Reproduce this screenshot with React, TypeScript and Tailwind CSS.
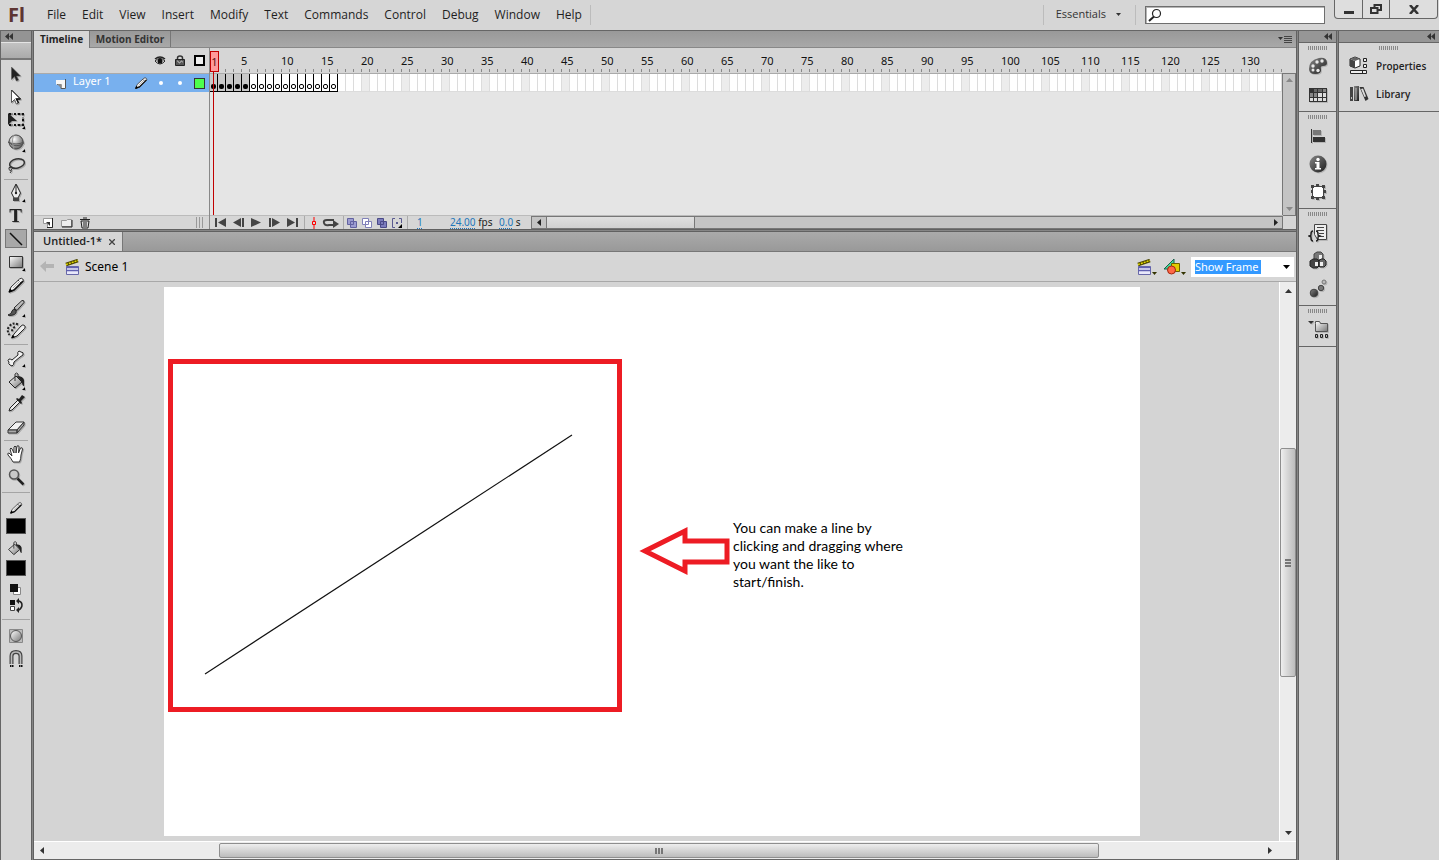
import type { ReactNode } from "react";

const UI = "font-['Open_Sans','Noto_Sans',sans-serif]";
const TAHOMA = "font-['Noto_Sans','Open_Sans',sans-serif]";

function Svg({ children, w = 20, h = 20 }: { children: ReactNode; w?: number; h?: number }) {
  return (
    <svg width={w} height={h} viewBox={`0 0 ${w} ${h}`} fill="none" className="block shrink-0" aria-hidden="true">
      {children}
    </svg>
  );
}

function Gradients() {
  return (
    <svg width="0" height="0" className="absolute" aria-hidden="true">
      <defs>
        <linearGradient id="metal" x1="0" y1="0" x2="1" y2="1">
          <stop offset="0" stopColor="#fff" />
          <stop offset="1" stopColor="#777" />
        </linearGradient>
        <linearGradient id="dark" x1="0" y1="0" x2="1" y2="1">
          <stop offset="0" stopColor="#888" />
          <stop offset="1" stopColor="#1c1c1c" />
        </linearGradient>
        <radialGradient id="ball" cx=".35" cy=".3" r=".8">
          <stop offset="0" stopColor="#fff" />
          <stop offset="1" stopColor="#555" />
        </radialGradient>
      </defs>
    </svg>
  );
}

const corner = <path d="M19 16v3h-3z" fill="#000" />;
const pencil = (
  <>
    <path d="M3 17l2-5 8.500-8q2-1.500 3.300 0t0 3L8 15z" fill="#f4f4f4" stroke="#333" />
    <path d="M17 6l-9 9-5 2" stroke="#111" strokeWidth="1.600" fill="none" />
    <path d="M2.500 17.500l1.500-4 2.500 2.500z" fill="#000" />
    <path d="M12 5l3.500 3.500" stroke="#333" />
    <path d="M7 13l7-7" stroke="#aaa" />
  </>
);
const bucket = (
  <>
    <path d="M3 11l7-6 6 6-7 6z" fill="url(#metal)" stroke="#222" />
    <path d="M9 10V3q1.500-2 3 0v4" stroke="#333" />
    <path d="M11 5q6 0 7 4v6q-2 0-2-4z" fill="#222" />
  </>
);
const arrow = "M5.500 3v12.500l3-3 1.800 4.500 2.200-1-2-4h4z";

const icons = {
  select: <path d={arrow} fill="#222" stroke="#555" strokeWidth=".5" />,
  subselect: (
    <>
      <path d={arrow} fill="#fff" stroke="#555" />
      <path d="M14.500 12h-4l2 4" stroke="#111" strokeWidth="1.500" />
      <path d="M5.500 3l9 9" stroke="#222" />
    </>
  ),
  transform: (
    <>
      <path d="M5 4h12v11H5" stroke="#444" strokeDasharray="2 1" />
      <path d="M8 3h2v2H8zM12 3h2v2h-2zM16 3h2v2h-2zM16 9h2v2h-2zM16 14h2v2h-2zM12 14h2v2h-2zM8 14h2v2H8zM3 14h2v2H3zM3 3h2v2H3z" fill="#111" />
      <path d="M2 3v12l4-4h5z" fill="#222" />
      {corner}
    </>
  ),
  rotate: (
    <>
      <circle cx="10" cy="9" r="7" fill="url(#ball)" stroke="#444" />
      <path d="M2 9q8 4 16 0M2 9q8 7 16 1" stroke="#555" />
      <path d="M8 2q-3 5 0 14" stroke="#999" />
      {corner}
    </>
  ),
  lasso: (
    <>
      <ellipse cx="11" cy="7.500" rx="7.500" ry="4.500" transform="rotate(-12 11 7.5)" stroke="#333" strokeWidth="1.500" />
      <path d="M5 11q-3 0-2 2.500t3-.500-2-2M5 14q1 1-1 3" stroke="#333" />
    </>
  ),
  pen: (
    <>
      <path d="M10 1l4.500 9-2.500 5H8l-2.500-5z" fill="#eee" stroke="#222" />
      <path d="M10 2v8" stroke="#222" />
      <circle cx="10" cy="10" r="1.200" fill="#222" />
      <path d="M7 15h6v3H7z" fill="#444" />
      {corner}
    </>
  ),
  line: <path d="M4 4l12 12" stroke="#111" strokeWidth="1.500" />,
  rect: (
    <>
      <path d="M3.500 4.500h13v11h-13z" fill="url(#metal)" stroke="#333" />
      {corner}
    </>
  ),
  pencil,
  brush: (
    <>
      <path d="M8 10l8-7.500q2.500-.500 2 2l-7 8z" fill="url(#metal)" stroke="#222" />
      <path d="M2 17q4-1 4-4 1-3 4-1 1 4-3 5t-5 0z" fill="#555" stroke="#222" />
      {corner}
    </>
  ),
  spray: (
    <>
      <path d="M6 17l2-4 7-8q2-2 3.500-.500t0 3L11 15z" fill="#eee" stroke="#222" />
      <path d="M12 3.500Q7 1 3.500 5t0 9M9 6q-3 1-3 5" stroke="#222" strokeWidth="2" strokeDasharray="2 1.500" />
      <path d="M5 17.500l1.500-3.500 2.500 2z" fill="#000" />
    </>
  ),
  bone: (
    <>
      <path d="M4 17q-2-1-1-3-2-1 0-3 2 0 3 1l6-5q-1-3 1-4l2 1q3 0 2 3l-3 2-6 5q0 3-2 4z" fill="#f2f2f2" stroke="#222" />
      {corner}
    </>
  ),
  bucket: (
    <>
      {bucket}
      {corner}
    </>
  ),
  dropper: (
    <>
      <path d="M3 17l1-3 8-8 2 2-8 8z" fill="#eee" stroke="#222" />
      <path d="M10 5l1-1 2 1 3-4 3 2-4 4 1 2-1 1z" fill="#222" />
    </>
  ),
  eraser: (
    <>
      <path d="M2 13l8-8h8l-7 8z" fill="#f2f2f2" stroke="#333" />
      <path d="M2 13h9v3H2zM11 16l7-8V5l-7 8z" fill="#aaa" stroke="#333" />
    </>
  ),
  hand: (
    <path
      d="M7 18q-2-4-5-7-1-2 1-2l3 3-2-7q1-2 2 0l2 4V3q1-2 2 0v6l1-7q2-1 2 1l-.500 6 2-5q2-1 2 1l-1.500 6q0 4-1.500 7z"
      fill="#fff"
      stroke="#333"
    />
  ),
  zoom: (
    <>
      <circle cx="8" cy="7.500" r="4.500" fill="#c8c8c8" stroke="#555" strokeWidth="1.500" />
      <path d="M11.500 11.500l6 6" stroke="#222" strokeWidth="2.500" />
    </>
  ),
};

type IconName = keyof typeof icons | "text";

const toolGroups: { name: IconName; label: string }[][] = [
  [
    { name: "select", label: "Selection" },
    { name: "subselect", label: "Subselection" },
    { name: "transform", label: "Free transform" },
    { name: "rotate", label: "3D rotation" },
    { name: "lasso", label: "Lasso" },
  ],
  [
    { name: "pen", label: "Pen" },
    { name: "text", label: "Text" },
    { name: "line", label: "Line" },
    { name: "rect", label: "Rectangle" },
    { name: "pencil", label: "Pencil" },
    { name: "brush", label: "Brush" },
    { name: "spray", label: "Deco" },
  ],
  [
    { name: "bone", label: "Bone" },
    { name: "bucket", label: "Paint bucket" },
    { name: "dropper", label: "Eyedropper" },
    { name: "eraser", label: "Eraser" },
  ],
  [
    { name: "hand", label: "Hand" },
    { name: "zoom", label: "Zoom" },
  ],
];

function Collapse() {
  return (
    <Svg w={8} h={7}>
      <path d="M4 0v7L0 3.500zM8 0v7L4 3.500z" fill="#333" />
    </Svg>
  );
}

function ToolPanel() {
  return (
    <aside className="flex w-[31px] shrink-0 flex-col border-l border-[#666] bg-[#d6d6d6]">
      <div className="flex h-[11px] items-center bg-[#949494] px-1">
        <Collapse />
      </div>
      <div className="h-[18px] border-t border-b-2 border-t-[#e4e4e4] border-b-[#777] bg-linear-to-b from-[#c2c2c2] to-[#aaa]" />
      <div className="flex flex-col items-center pt-[2px] pr-px">
        {toolGroups.map((group, i) => (
          <div key={i} className="flex w-full flex-col items-center">
            {group.map((t) => (
              <button
                key={t.name}
                aria-label={t.label}
                className={
                  t.name === "line"
                    ? "my-[2px] flex h-[19px] w-[22px] items-center justify-center border border-[#777] bg-[#a8a8a8]"
                    : "flex h-[23px] w-[24px] items-center justify-center drop-shadow-[1px_1px_0_rgba(0,0,0,0.2)]"
                }
              >
                {t.name === "text" ? (
                  <span className="font-['Liberation_Serif',serif] text-[19px] leading-5 font-bold text-[#222]">T</span>
                ) : (
                  <Svg>{icons[t.name]}</Svg>
                )}
              </button>
            ))}
            {i < 3 ? <div className="mt-[2px] mb-px h-px w-6 bg-[#a5a5a5]" /> : null}
          </div>
        ))}
        <div className="mt-1 h-px w-7 bg-[#a5a5a5]" />
        <div className="flex flex-col items-center pt-[4px]">
          <button aria-label="Stroke color" className="flex flex-col items-center gap-px">
            <svg width="20" height="20" viewBox="-3 -4 26 26" aria-hidden="true">{pencil}</svg>
            <span className="h-4 w-5 border border-[#555] bg-black" />
          </button>
          <button aria-label="Fill color" className="mt-[5px] flex flex-col items-center gap-px">
            <svg width="20" height="20" viewBox="0 -1 23 23" fill="none" aria-hidden="true">{bucket}</svg>
            <span className="h-4 w-5 border border-[#555] bg-black" />
          </button>
          <button aria-label="Black and white" className="mt-1">
            <Svg w={20} h={18}>
              <path d="M7.500 7.500h7v7h-7z" fill="#fff" stroke="#888" />
              <path d="M4 4h8v8H4z" fill="#111" />
            </Svg>
          </button>
          <button aria-label="Swap colors">
            <Svg w={20} h={16}>
              <path d="M4 2h5v5H4z" fill="#111" />
              <path d="M4.500 8.500h4v4h-4z" fill="#fff" stroke="#444" />
              <path d="M11 3h2q3 1 3 4t-3 5h-2" stroke="#222" strokeWidth="1.500" />
              <path d="M10 3l3-3v6zM10 12l3-3v6z" fill="#222" />
            </Svg>
          </button>
          <div className="my-[5px] h-px w-7 bg-[#a5a5a5]" />
          <button aria-label="Object drawing">
            <Svg w={20} h={22}>
              <path d="M3.500 4.500h13v13h-13z" fill="#bbb" stroke="#888" />
              <circle cx="10" cy="11" r="5.500" fill="url(#metal)" stroke="#555" />
            </Svg>
          </button>
          <button aria-label="Snap to objects">
            <Svg w={20} h={24}>
              <path d="M5.500 17V9q0-4 4.500-4t4.500 4v8" stroke="#444" strokeWidth="4" />
              <path d="M5.500 17V9q0-4 4.500-4t4.500 4v8" stroke="#bbb" strokeWidth="1.600" />
              <path d="M4 19h1.500M6 19h1.500M13 19h1.500M15 19h1.500" stroke="#111" strokeWidth="2" />
            </Svg>
          </button>
        </div>
      </div>
    </aside>
  );
}

const menus = ["File", "Edit", "View", "Insert", "Modify", "Text", "Commands", "Control", "Debug", "Window", "Help"];

function MenuBar() {
  return (
    <header className="flex h-[30px] shrink-0 items-center bg-[#d6d6d6] text-[12px] text-[#1e1e1e]">
      <div className="w-[39px] pl-2 font-['Noto_Sans',sans-serif] text-[20px] leading-6 font-bold text-[#5d3533]">Fl</div>
      <nav className="flex h-full items-center">
        {menus.map((m) => (
          <button key={m} className="px-2">
            {m}
          </button>
        ))}
        <div className="h-5 w-px bg-[#bcbcbc]" />
      </nav>
      <div className="ml-auto flex h-full items-start">
        <div className="mt-[5px] h-5 w-px bg-[#bcbcbc]" />
        <button className="mt-[5px] flex h-[18px] items-center gap-[10px] px-3 text-[11px] text-[#333]">
          Essentials
          <Svg w={5} h={3}>
            <path d="M0 0h5L2.500 3z" fill="#333" />
          </Svg>
        </button>
        <div className="mt-[5px] ml-[2px] h-5 w-px bg-[#bcbcbc]" />
        <label className="mt-[6px] ml-[9px] flex h-[18px] w-[180px] items-center border border-[#6e6e6e] bg-white pl-[2px] shadow-[inset_1px_1px_0_#b5b5b5]">
          <Svg w={14} h={14}>
            <circle cx="8.500" cy="5.500" r="4" stroke="#222" strokeWidth="1.200" />
            <path d="M6 8.500L1 13" stroke="#222" strokeWidth="2" />
          </Svg>
          <input aria-label="Search" className="min-w-0 flex-1 bg-transparent px-1 outline-none" />
        </label>
        <div className="mr-px ml-[9px] flex h-[19px] rounded-b-[4px] border border-t-0 border-[#666] bg-[#dedede]">
          <button aria-label="Minimize" className="flex w-[28px] items-center justify-center border-r border-[#666] pt-[6px]">
            <Svg w={10} h={3}>
              <path d="M0 0h10v3H0z" fill="#333" />
            </Svg>
          </button>
          <button aria-label="Restore" className="flex w-[27px] items-center justify-center border-r border-[#666]">
            <Svg w={12} h={10}>
              <path d="M4.500 5V1h6.500v5H8M1 4h6.500v5H1z" stroke="#333" strokeWidth="2" />
            </Svg>
          </button>
          <button aria-label="Close" className="flex w-[47px] items-center justify-center">
            <Svg w={10} h={9}>
              <path d="M1 0l8 9M9 0L1 9" stroke="#333" strokeWidth="2.500" />
            </Svg>
          </button>
        </div>
      </div>
    </header>
  );
}

const frames = Array.from({ length: 134 }, (_, i) => i + 1);

function Ruler() {
  return (
    <div className={`relative flex h-[25px] min-w-0 overflow-hidden text-[11px] leading-[15px] text-[#111] ${TAHOMA}`}>
      {frames.map((n) => (
        <div key={n} className="flex h-full w-2 shrink-0 flex-col justify-end">
          {n % 5 === 0 ? <span className="mb-px -ml-px w-0 whitespace-nowrap">{n}</span> : null}
          <span className="mb-px h-[3px] w-full border-r border-[#888]" />
        </div>
      ))}
      <div className="absolute top-[3px] left-0 h-[21px] w-[9px] border border-[#c00000] bg-[#ff9a9a] pt-[2px] leading-[15px] text-[#5a1010]">
        <span className="flex justify-center">1</span>
      </div>
    </div>
  );
}

function FrameRow() {
  return (
    <div className="flex h-[19px] min-w-0 overflow-hidden border-t border-[#aaa]">
      {frames.map((n) => {
        if (n <= 16) {
          return (
            <div
              key={n}
              className={
                n <= 5
                  ? "flex w-2 shrink-0 items-end justify-center border-r border-b border-black bg-[#c8c8c8] pb-[2px]"
                  : "flex w-2 shrink-0 items-end justify-center border-r border-b border-black bg-white pb-[2px]"
              }
            >
              <span
                className={
                  n <= 5
                    ? "size-[5px] rounded-[2px] bg-black"
                    : "size-[5px] rounded-[2px] border border-black bg-white"
                }
              />
            </div>
          );
        }
        return (
          <div
            key={n}
            className={
              n % 5 === 0
                ? "w-2 shrink-0 border-r border-b border-[#dcdcdc] bg-[#ececec]"
                : "w-2 shrink-0 border-r border-b border-[#dcdcdc] bg-white"
            }
          />
        );
      })}
    </div>
  );
}

const onionIcons = [
  <path key="a" d="M.500.500h6v6h-6zM3.500 3.500h6v6h-6z" fill="#9c9cd0" stroke="#6262a0" />,
  <path key="b" d="M.500.500h6v6h-6zM3.500 3.500h6v6h-6z" fill="#fff" stroke="#8080b8" />,
  <path key="c" d="M.500.500h6v6h-6zM3.500 3.500h6v6h-6z" fill="#7c7cbc" stroke="#4a4a88" />,
  <g key="d">
    <path d="M3 .500H.500v9H3M7 .500h2.500V5" stroke="#5a5a90" />
    <path d="M4 4h2v2H4z" fill="#5a5a90" />
    <path d="M10 6v4H6z" fill="#000" />
  </g>,
];

function Controls() {
  return (
    <div className="flex h-[14px] min-w-0 border-t border-[#bbb]">
      <div className="flex shrink-0 items-center gap-[7px] pl-[5px]">
        <button aria-label="First frame"><Svg w={11} h={9}><path d="M0 0h2v9H0zM11 0v9L3 4.500z" fill="#444" /></Svg></button>
        <button aria-label="Step back"><Svg w={11} h={9}><path d="M9 0h2v9H9zM8 0v9L0 4.500z" fill="#444" /></Svg></button>
        <button aria-label="Play"><Svg w={11} h={9}><path d="M0 0v9l10-4.500z" fill="#444" /></Svg></button>
        <button aria-label="Step forward"><Svg w={11} h={9}><path d="M0 0h2v9H0zM3 0v9l8-4.500z" fill="#444" /></Svg></button>
        <button aria-label="Last frame"><Svg w={11} h={9}><path d="M9 0h2v9H9zM0 0v9l8-4.500z" fill="#444" /></Svg></button>
      </div>
      <div className="ml-[6px] h-full w-px shrink-0 bg-[#aaa]" />
      <div className="flex shrink-0 items-center gap-[6px] pl-[7px]">
        <button aria-label="Center frame"><Svg w={4} h={12}><path d="M2 0v4M2 8v4M.500 4.500h3v3h-3z" stroke="#f00" /></Svg></button>
        <button aria-label="Loop"><Svg w={17} h={10}><path d="M12 2H5Q1 2 2 5t5 2h5" stroke="#444" strokeWidth="2" /><path d="M11 2v8l6-4z" fill="#444" /></Svg></button>
      </div>
      <div className="ml-1 h-full w-px shrink-0 bg-[#aaa]" />
      <div className="flex shrink-0 items-center gap-[5px] pl-[3px]">
        {onionIcons.map((p, i) => (
          <button key={i} aria-label={`Onion skin ${i + 1}`}>
            <Svg w={10} h={10}>{p}</Svg>
          </button>
        ))}
      </div>
      <div className="ml-[5px] h-full w-px shrink-0 bg-[#aaa]" />
      <div className={`flex shrink-0 items-start pl-[9px] text-[10px] leading-[12px] text-[#222] ${TAHOMA}`}>
        <span className="w-[33px] text-[#2276bb]"><u className="decoration-dotted underline-offset-2">1</u></span>
        <span className="w-[49px] whitespace-nowrap"><u className="text-[#2276bb] decoration-dotted underline-offset-2">24.00</u> fps</span>
        <span className="w-[32px] whitespace-nowrap"><u className="text-[#2276bb] decoration-dotted underline-offset-2">0.0</u> s</span>
      </div>
      <div className="flex min-w-0 flex-1 items-center border border-[#777] bg-[#c4c4c4]">
        <div className="flex w-[14px] shrink-0 justify-center"><Svg w={4} h={7}><path d="M4 0v7L0 3.500z" fill="#222" /></Svg></div>
        <div className="h-full w-[149px] shrink-0 border-x border-[#777] bg-linear-to-b from-[#e0e0e0] to-[#d0d0d0]" />
        <div className="ml-auto pr-1"><Svg w={4} h={7}><path d="M0 0v7l4-3.500z" fill="#222" /></Svg></div>
      </div>
    </div>
  );
}

function Timeline() {
  return (
    <section className="flex shrink-0 flex-col">
      <div className="flex h-[17px] border-b border-[#888] bg-linear-to-b from-[#999] to-[#a8a8a8] text-[10px] leading-[17px] font-bold text-[#222]">
        <button className="-mb-px w-[56px] border-r border-[#777] bg-[#d6d6d6] text-center">Timeline</button>
        <button className="w-[81px] border-r border-[#777] text-[#333]">Motion Editor</button>
        <button aria-label="Timeline options" className="ml-auto pr-1">
          <Svg w={14} h={9}>
            <path d="M0 2h5L2.500 5z" fill="#333" />
            <path d="M6 1.500h8M6 3.500h8M6 5.500h8M6 7.500h8" stroke="#444" />
          </Svg>
        </button>
      </div>
      <div className="flex h-[181px]">
        <div className="flex w-[176px] shrink-0 flex-col border-r border-[#888]">
          <div className="flex h-[25px] items-center justify-end gap-[9px] pr-1">
            <Svg w={12} h={10}>
              <path d="M1 5q5-5 10 0-5 6-10 0z" fill="#ddd" stroke="#222" />
              <circle cx="6" cy="5" r="2.500" fill="#111" />
              <path d="M1 3q5-4 10 0" stroke="#222" strokeWidth="1.500" />
            </Svg>
            <Svg w={10} h={11}>
              <path d="M2.500 5V3q0-2 2.500-2t2.500 2v2" stroke="#333" strokeWidth="1.500" />
              <path d="M.500 4.500h9v6h-9z" fill="#555" stroke="#222" />
              <path d="M2 6h1v1h1v1h1V7h1V6h1v1h1" stroke="#aaa" />
            </Svg>
            <Svg w={11} h={11}>
              <path d="M1 1h9v9H1z" stroke="#000" strokeWidth="2" fill="#eee" />
            </Svg>
          </div>
          <div className={`flex h-[19px] items-center border-t border-[#aaa] bg-[#78b0ee] text-[11px] text-white ${TAHOMA}`}>
            <div className="ml-[22px] w-[17px] pt-[2px]">
              <Svg w={11} h={10}>
                <path d="M1 1h9v9H5V6z" fill="#fff" />
                <path d="M0 1h9v8H5.500V5.500H0z" fill="#f6f6f6" />
                <path d="M9.500 0v9.500H5V5.500H1" stroke="#555" />
                <path d="M1 5l4.500 4.500V5z" fill="#888" />
              </Svg>
            </div>
            <span className="flex-1 pb-[3px]">Layer 1</span>
            <svg width="14" height="14" viewBox="1 1 18 18" aria-hidden="true">{pencil}</svg>
            <span className="ml-[11px] size-[4px] rounded-full bg-white" />
            <span className="ml-[15px] size-[4px] rounded-full bg-white" />
            <span className="mr-1 ml-[12px] size-[11px] border border-[#333] bg-[#4dff4d]" />
          </div>
          <div className="flex-1 bg-[#e5e5e5]" />
          <div className="flex h-[14px] shrink-0 items-center gap-[7px] border-t border-[#bbb] pl-[9px]">
            <button aria-label="New layer"><Svg w={11} h={10}><path d="M.500.500h9v9h-5v-4h-4z" fill="#fff" stroke="#999" /><path d="M9.500 0v9.500H4" stroke="#222" /><path d="M3 4h4v4z" fill="#333" /></Svg></button>
            <button aria-label="New folder"><Svg w={12} h={10}><path d="M.500 2.500h5l1-1h4v7H.500z" fill="#eee" stroke="#999" /><path d="M11 2v7H1" stroke="#222" /></Svg></button>
            <button aria-label="Delete layer"><Svg w={10} h={12}><path d="M1 4h8l-1 7H2z" fill="#ddd" stroke="#222" /><path d="M0 2.500h10M3 1h4M4 5v5M6 5v5" stroke="#222" /></Svg></button>
            <div className="ml-auto flex h-[11px] gap-[2px] pr-[6px]">
              <i className="w-px bg-[#999]" /><i className="w-px bg-[#999]" /><i className="w-px bg-[#999]" />
            </div>
          </div>
        </div>
        <div className="flex min-w-0 flex-1 flex-col bg-[#e5e5e5]">
          <div className="bg-[#d6d6d6]"><Ruler /></div>
          <div className="flex min-h-0 flex-1">
            <div className="relative min-w-0 flex-1">
              <FrameRow />
              <div className="absolute -top-px bottom-0 left-[3px] w-px bg-[#c00000]" />
            </div>
            <div className="flex w-[14px] shrink-0 flex-col items-center justify-between border-x border-t border-[#777] bg-[#c4c4c4] py-1">
              <Svg w={7} h={4}><path d="M0 4h7L3.500 0z" fill="#888" /></Svg>
              <Svg w={7} h={4}><path d="M0 0h7L3.500 4z" fill="#888" /></Svg>
            </div>
          </div>
          <div className="flex bg-[#d6d6d6]">
            <div className="min-w-0 flex-1"><Controls /></div>
            <div className="w-[13px] shrink-0 border-t border-[#777]" />
          </div>
        </div>
      </div>
    </section>
  );
}

function Clapper() {
  return (
    <Svg w={15} h={16}>
      <path d="M1.500 7.500h12v8h-12z" fill="#e8e8fa" stroke="#6868a8" />
      <path d="M1 8.500h13M1 11.500h13" stroke="#6060b0" strokeWidth="1.500" />
      <path d="M1 5.500L13 1.500" stroke="#4b4600" strokeWidth="3.500" />
      <path d="M1 5.500L13 1.500" stroke="#e3d800" strokeWidth="1.500" strokeDasharray="2 1" />
    </Svg>
  );
}

function Caret() {
  return (
    <Svg w={5} h={3}>
      <path d="M0 0h5L2.500 3z" fill="#333300" />
    </Svg>
  );
}

function SceneBar() {
  return (
    <div className="flex h-[30px] shrink-0 items-center border-b border-[#a8a8a8]">
      <button aria-label="Back" className="ml-[6px]">
        <Svg w={14} h={11}><path d="M6 0v3h8v4H6v4L0 5z" fill="#b4b4b4" /></Svg>
      </button>
      <button className={`ml-[11px] flex items-center gap-[5px] text-[12px] text-black ${TAHOMA}`}>
        <Clapper />
        Scene 1
      </button>
      <button aria-label="Edit scene" className="ml-auto flex items-end"><Clapper /><Caret /></button>
      <button aria-label="Edit symbols" className="ml-[6px] flex items-end">
        <Svg w={18} h={17}>
          <path d="M1 11L11 1v10z" fill="#42d89b" stroke="#16614a" />
          <path d="M8.500 5.500h8v8h-8z" fill="#e0cc00" stroke="#6d6000" />
          <circle cx="8.500" cy="12" r="4" fill="#ff6947" stroke="#a32610" />
        </Svg>
        <Caret />
      </button>
      <label className="mr-[2px] ml-[5px] flex h-[20px] w-[103px] items-center justify-between bg-white px-[4px]">
        <select aria-label="Zoom level" defaultValue="Show Frame" className={`h-[14px] w-[66px] appearance-none bg-[#3399ff] text-[11px] leading-[14px] text-white ${TAHOMA}`}>
          <option>Show Frame</option>
          <option>Show All</option>
          <option>100%</option>
        </select>
        <Svg w={7} h={4}><path d="M0 0h7L3.500 4z" fill="#000" /></Svg>
      </label>
    </div>
  );
}

function Stage() {
  return (
    <div className="min-w-0 flex-1 overflow-hidden bg-[#d4d4d4] pt-[5px] pl-[130px]">
      <div className="relative h-[549px] w-[976px] bg-white">
        <svg width="976" height="549" viewBox="0 0 976 549" fill="none" className="block" aria-hidden="true">
          <path d="M6.500 74.500h449v348H6.500z" stroke="#ed1c24" strokeWidth="5" />
          <path d="M41 387L408 148" stroke="#111" strokeWidth="1.200" />
          <path d="M481 264l40-20v10h42v21h-42v9z" stroke="#ed1c24" strokeWidth="5" />
        </svg>
        <p className="absolute top-[232px] left-[569px] w-[180px] font-['Lato','Open_Sans',sans-serif] text-[14px] leading-[18px] text-black">
          You can make a line by<br />clicking and dragging where<br />you want the like to<br />start/finish.
        </p>
      </div>
    </div>
  );
}

function DocumentArea() {
  return (
    <section className="flex min-h-0 flex-1 flex-col bg-[#d6d6d6]">
      <div className="flex h-[20px] shrink-0 border-b border-[#777] bg-linear-to-b from-[#aaa] to-[#999]">
        <div className="flex w-[89px] items-center justify-between border-r border-[#777] bg-[#d6d6d6] pr-[7px] pl-[9px] text-[11px] font-semibold text-[#222]">
          <span className="whitespace-nowrap">Untitled-1*</span>
          <button aria-label="Close document"><Svg w={6} h={6}><path d="M0 0l6 6M6 0L0 6" stroke="#444" strokeWidth="1.300" /></Svg></button>
        </div>
      </div>
      <SceneBar />
      <div className="flex min-h-0 flex-1">
        <Stage />
        <div className="flex w-[17px] shrink-0 flex-col items-center border-l border-white bg-[#ececec] pt-[7px] pb-[6px]">
          <Svg w={7} h={4}><path d="M0 4h7L3.500 0z" fill="#333" /></Svg>
          <div className="w-full flex-[155]" />
          <div className="flex w-full flex-[227] flex-col items-center justify-center gap-px rounded-[2px] border border-[#8e8e8e] bg-linear-to-r from-[#eee] to-[#bcbcbc]">
            <i className="h-[2px] w-[6px] bg-[#777]" /><i className="h-[2px] w-[6px] bg-[#777]" /><i className="h-[2px] w-[6px] bg-[#777]" />
          </div>
          <div className="w-full flex-[154]" />
          <Svg w={7} h={4}><path d="M0 0h7L3.500 4z" fill="#333" /></Svg>
        </div>
      </div>
      <div className="flex h-[18px] shrink-0 items-center border-t border-white bg-[#ececec] pr-6 pl-[6px]">
        <Svg w={4} h={7}><path d="M4 0v7L0 3.500z" fill="#333" /></Svg>
        <div className="flex-[175]" />
        <div className="flex h-[15px] flex-[881] items-center justify-center gap-px rounded-[2px] border border-[#8e8e8e] bg-linear-to-b from-[#eee] to-[#bcbcbc]">
          <i className="h-[6px] w-[2px] bg-[#777]" /><i className="h-[6px] w-[2px] bg-[#777]" /><i className="h-[6px] w-[2px] bg-[#777]" />
        </div>
        <div className="flex-[169]" />
        <Svg w={4} h={7}><path d="M0 0v7l4-3.500z" fill="#333" /></Svg>
      </div>
    </section>
  );
}

const panelIcons: { label: string; art: ReactNode }[][] = [
  [
    {
      label: "Color",
      art: (
        <>
          <path d="M11 1q8-1 8 5 0 3-4 3-3 0-2 3 1 5-6 5-6 0-6-5Q1 3 11 1z" fill="url(#dark)" />
          <g fill="#e8e8e8"><circle cx="9" cy="5" r="1.700" /><circle cx="14" cy="4" r="1.700" /><circle cx="5" cy="9" r="1.700" /><circle cx="5" cy="13" r="1.500" /><circle cx="10" cy="13.500" r="1.700" /></g>
        </>
      ),
    },
    {
      label: "Swatches",
      art: (
        <>
          <path d="M1 3h18v14H1z" fill="#333" />
          <path d="M6 4h3v3H6zM10 4h4v3h-4z" fill="#666" /><path d="M2 8h3v4H2zM6 8h3v4H6zM15 4h3v3h-3z" fill="#888" />
          <path d="M10 8h4v4h-4zM15 8h3v4h-3zM2 13h3v3H2zM6 13h3v3H6zM10 13h4v3h-4zM15 13h3v3h-3z" fill="#ddd" />
        </>
      ),
    },
  ],
  [
    { label: "Align", art: <><path d="M3.500 3v14" stroke="#333" /><path d="M5 4h8v5H5z" fill="#777" /><path d="M5 11h12v5H5z" fill="#333" /></> },
    { label: "Info", art: <><circle cx="10" cy="10" r="8.500" fill="url(#dark)" /><circle cx="10" cy="5.500" r="1.700" fill="#fff" /><path d="M7 8h4.500v6H13v1.500H7V14h1.500V9.500H7z" fill="#fff" /></> },
    { label: "Transform", art: <><path d="M4.500 4.500h11v11h-11z" fill="#fff" stroke="#444" /><path d="M3 3h3v3H3zM8 2h3v3H8zM14 3h3v3h-3zM3 8h2v3H3zM15 8h3v3h-3zM3 14h3v3H3zM8 15h3v3H8zM14 14h3v3h-3z" fill="#444" /></> },
  ],
  [
    { label: "Code snippets", art: <><path d="M6.500 1.500h12v15h-9l-3-5z" fill="#eee" stroke="#444" /><path d="M9 4.500h7M9 7.500h7M11 10.500h5M12 13.500h4" stroke="#444" /><path d="M5 8q-2 0-2 3t-2 2q2-1 2 2t2 3M8 8q2 0 2 3t2 2q-2-1-2 2t-2 3" stroke="#222" strokeWidth="1.500" /></> },
    {
      label: "Components",
      art: (
        <>
          <path d="M6 3l3-2h4l2 2v6H6z" fill="#777" stroke="#444" />
          <path d="M11 4h3v4h-3z" fill="#eee" />
          <path d="M2 10l3-2h4l2 2v5l-2 2H5l-3-2z" fill="#444" stroke="#222" />
          <path d="M7 11h3v4H7z" fill="#eee" />
          <path d="M11 10l2-2h3l2 2v4l-2 2h-4l-1-1z" fill="#666" stroke="#222" />
          <path d="M12 11h3v4h-3z" fill="#eee" />
        </>
      ),
    },
    { label: "Motion presets", art: <><circle cx="6" cy="14" r="3.800" fill="url(#dark)" stroke="#444" /><circle cx="13" cy="9" r="2.700" fill="#777" stroke="#444" /><circle cx="16" cy="3" r="2" fill="#bbb" stroke="#777" /></> },
  ],
  [
    { label: "Project", art: <><path d="M0 1h6L3 4z" fill="#333" /><path d="M7.500 3.500V1.500h4l1 2h7v8h-12z" fill="url(#metal)" stroke="#555" /><path d="M7.500 14.500h2v3h-2zM12.500 14.500h2v3h-2zM17.500 14.500h2v3h-2z" stroke="#222" /></> },
  ],
];

function Grip() {
  return <div className="h-[4px] w-[20px] bg-[repeating-linear-gradient(90deg,#888_0px,#888_1px,transparent_1px,transparent_2px)]" />;
}

function IconDock() {
  return (
    <aside className="flex w-[37px] shrink-0 flex-col bg-[#d6d6d6]">
      <div className="flex h-3 shrink-0 items-center justify-end border-b border-[#666] bg-[#969696] pr-1"><Collapse /></div>
      {panelIcons.map((g, i) => (
        <div key={i} className="flex flex-col items-center border-b border-[#666] pt-[3px] pb-[2px]">
          <Grip />
          <div className="pt-[3px]">
            {g.map((p) => (
              <button key={p.label} aria-label={p.label} className="flex h-7 w-6 items-center justify-center drop-shadow-[1px_1px_0_rgba(0,0,0,0.15)]">
                <Svg>{p.art}</Svg>
              </button>
            ))}
          </div>
        </div>
      ))}
    </aside>
  );
}

function PanelDock() {
  return (
    <aside className="flex w-[100px] shrink-0 flex-col bg-[#d6d6d6] text-[10px] font-semibold text-[#222]">
      <div className="flex h-3 shrink-0 items-center justify-end border-b border-[#666] bg-[#969696] pr-1"><Collapse /></div>
      <div className="flex flex-col items-center border-b border-[#666] pt-[3px] pb-[2px]">
        <Grip />
        <div className="w-full pt-[3px]">
          <button className="flex h-7 w-full items-center gap-[7px] pb-[2px] pl-[10px]">
            <Svg>
              <path d="M1 3l5-2 5 2v7l-5 2-5-2z" fill="#fff" stroke="#222" />
              <path d="M1 3l5 2v7l-5-2z" fill="#444" /><path d="M1 3l5-2 5 2-5 2z" fill="#666" />
              <path d="M14.500 2.500h3v3h-3zM14.500 8.500h3v3h-3zM1.500 14.500h16v3h-16z" fill="#eee" stroke="#222" />
              <path d="M13.500 15v2" stroke="#222" />
            </Svg>
            Properties
          </button>
          <button className="flex h-7 w-full items-center gap-[7px] pb-[2px] pl-[10px]">
            <Svg>
              <path d="M1 3h3v14H1z" fill="#444" /><path d="M5 2h5v15H5z" fill="url(#dark)" />
              <path d="M10.500 3h4l5 12-3 2z" fill="#333" />
              <path d="M12 5l2-.500 3 8-1.500.500z" fill="#ddd" /><path d="M2.500 13v2M7 4v12" stroke="#bbb" />
            </Svg>
            Library
          </button>
        </div>
      </div>
    </aside>
  );
}

function Divider() {
  return <div className="w-[3px] shrink-0 border-x border-[#616161] bg-[#858585]" />;
}

export default function App() {
  return (
    <div className={`flex h-screen min-h-[700px] flex-col overflow-hidden bg-[#d6d6d6] ${UI}`}>
      <Gradients />
      <MenuBar />
      <div className="flex min-h-0 flex-1 border-t border-[#666]">
        <ToolPanel />
        <Divider />
        <main className="flex min-w-0 flex-1 flex-col border-b border-[#666]">
          <Timeline />
          <div className="h-[3px] shrink-0 border-y border-[#616161] bg-[#858585]" />
          <DocumentArea />
        </main>
        <Divider />
        <IconDock />
        <Divider />
        <PanelDock />
      </div>
    </div>
  );
}
